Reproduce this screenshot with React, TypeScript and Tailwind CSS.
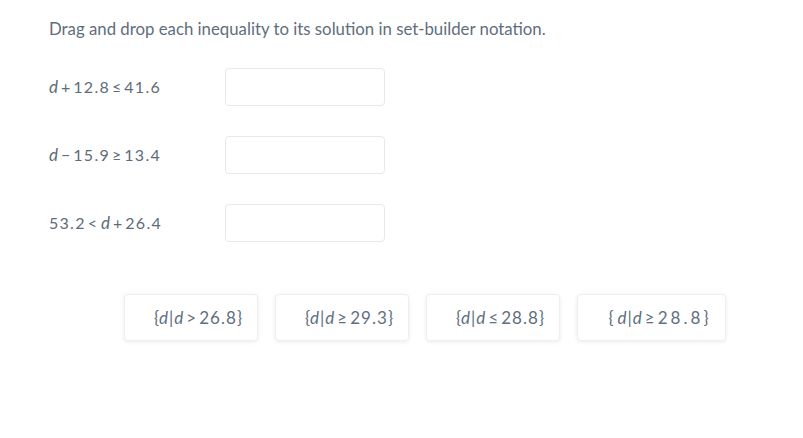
import React from "react";

const rows: { left: React.ReactNode }[] = [
  {
    left: (
      <>
        <i className="text-[17px]">d</i>
        <span className="mx-[3px]">+</span>
        <span className="tracking-[0.08em]">12.8</span>
        <span className="ml-[2px] mr-[3px]">≤</span>
        <span className="tracking-[0.08em]">41.6</span>
      </>
    ),
  },
  {
    left: (
      <>
        <i className="text-[17px]">d</i>
        <span className="mx-[3px]">−</span>
        <span className="tracking-[0.08em]">15.9</span>
        <span className="ml-[2px] mr-[3px]">≥</span>
        <span className="tracking-[0.08em]">13.4</span>
      </>
    ),
  },
  {
    left: (
      <>
        <span className="tracking-[0.08em]">53.2</span>
        <span className="ml-[2px] mr-[4px]">&lt;</span>
        <i className="text-[17px]">d</i>
        <span className="mx-[3px]">+</span>
        <span className="tracking-[0.08em]">26.4</span>
      </>
    ),
  },
];

const answers = [
  { op: ">", n: "26.8", w: "w-[134px]", wide: false },
  { op: "≥", n: "29.3", w: "w-[134px]", wide: false },
  { op: "≤", n: "28.8", w: "w-[134px]", wide: false },
  { op: "≥", n: "28.8", w: "w-[149px]", wide: true },
];

export default function App() {
  return (
    <div
      className="w-[803px] h-[438px] bg-white text-[#5d6c7a]"
      style={{ fontFamily: "Lato, 'Open Sans', sans-serif" }}
    >
      <div className="pl-[49px] pt-[17px]">
        <p className="text-[16.8px] leading-[24px] text-[#5f6e7c]">
          Drag and drop each inequality to its solution in set-builder notation.
        </p>

        <div className="mt-[27px] flex flex-col gap-[30px]">
          {rows.map((r, i) => (
            <div key={i} className="flex items-center">
              <div className="w-[176px] text-[16px] text-[#606c78]">{r.left}</div>
              <div className="w-[160px] h-[38px] rounded-[4px] border border-[#e8e8e8] bg-white" />
            </div>
          ))}
        </div>
      </div>

      <div className="mt-[52px] pl-[124px] flex gap-[17px]">
        {answers.map((a, i) => (
          <div
            key={i}
            className={`${a.w} h-[47px] rounded-[4px] bg-white border border-[#efefef] shadow-[0_1px_4px_rgba(0,0,0,0.08)] flex items-center justify-center pl-[14px] text-[17px] text-[#607080]`}
          >
            <span className={a.wide ? "mr-[4px]" : ""}>{"{"}</span>
            <i>d</i>
            <span className="mx-[1px]">|</span>
            <i>d</i>
            <span className="mx-[3px]">{a.op}</span>
            <span className={a.wide ? "tracking-[0.18em]" : "tracking-[0.06em]"}>{a.n}</span>
            <span>{"}"}</span>
          </div>
        ))}
      </div>
    </div>
  );
}
